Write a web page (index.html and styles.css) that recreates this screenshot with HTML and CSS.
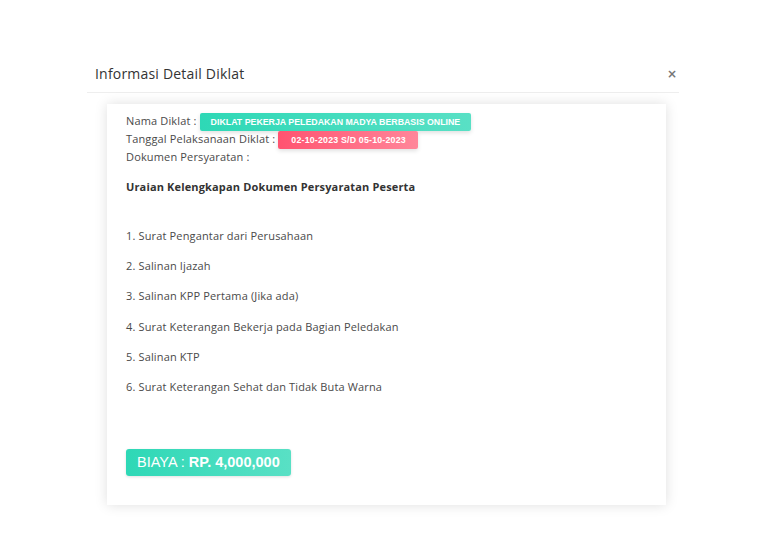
FILE: index.html
```html
<!DOCTYPE html>
<html>
<head>
<meta charset="utf-8">
<link rel="stylesheet" href="styles.css">
</head>
<body>
<div class="modal">
  <div class="modal-header">
    <h4 class="modal-title">Informasi Detail Diklat</h4>
    <span class="close">&times;</span>
  </div>
  <div class="modal-body">
    <div class="card">
      <div class="info">
        <div>Nama Diklat : <span class="badge badge-teal">DIKLAT PEKERJA PELEDAKAN MADYA BERBASIS ONLINE</span></div>
        <div>Tanggal Pelaksanaan Diklat : <span class="badge badge-red">02-10-2023 S/D 05-10-2023</span></div>
        <div>Dokumen Persyaratan :</div>
      </div>
      <p class="heading">Uraian Kelengkapan Dokumen Persyaratan Peserta</p>
      <ul class="docs">
        <li>1. Surat Pengantar dari Perusahaan</li>
        <li>2. Salinan Ijazah</li>
        <li>3. Salinan KPP Pertama (Jika ada)</li>
        <li>4. Surat Keterangan Bekerja pada Bagian Peledakan</li>
        <li>5. Salinan KTP</li>
        <li>6. Surat Keterangan Sehat dan Tidak Buta Warna</li>
      </ul>
      <div class="price">BIAYA : <b>RP. 4,000,000</b></div>
    </div>
  </div>
</div>
</body>
</html>
```

FILE: styles.css
```css
html, body {
  margin: 0;
  padding: 0;
  background: #fff;
}
body {
  font-family: "Open Sans", "Noto Sans", sans-serif;
  color: #4a4a4a;
}
.modal {
  width: 592px;
  margin: 0 0 0 87px;
  padding-top: 55px;
}
.modal-header {
  display: flex;
  align-items: center;
  justify-content: space-between;
  height: 37px;
  padding: 0 2px 0 8px;
  border-bottom: 1px solid #eeeeee;
}
.modal-title {
  margin: 0;
  font-size: 14px;
  font-weight: 400;
  color: #333;
  letter-spacing: 0.2px;
}
.close {
  font-family: "DejaVu Sans", sans-serif;
  font-size: 12px;
  font-weight: 700;
  color: #777;
}
.modal-body {
  padding: 11px 13px 20px 20px;
}
.card {
  background: #fff;
  box-shadow: 0 0 12px rgba(0, 0, 0, 0.13);
  padding: 8px 19px 29px 19px;
}
.info {
  font-size: 11px;
  line-height: 18px;
  letter-spacing: 0.15px;
}
.badge {
  font-family: "Liberation Sans", Arial, sans-serif;
  font-weight: 700;
  font-size: 8.8px;
  line-height: 13px;
  letter-spacing: 0;
  color: #fff;
  padding: 4px 11px 4px 11px;
  border-radius: 2px;
  box-shadow: 0 2px 4px rgba(0, 0, 0, 0.12);
}
.badge-teal {
  background: linear-gradient(to right, #2ed8b6, #59e0c5);
}
.badge-red {
  background: linear-gradient(to right, #ff5370, #ff869a);
  position: relative;
  z-index: 1;
  padding: 4px 12px 4px 13px;
  letter-spacing: 0.2px;
}
.heading {
  margin: 13px 0 0;
  font-size: 11px;
  font-weight: 700;
  color: #333;
  line-height: 16px;
  letter-spacing: 0.15px;
}
.docs {
  list-style: none;
  margin: 33px 0 0;
  padding: 0;
  font-size: 11px;
  letter-spacing: 0.15px;
}
.docs li {
  line-height: 16px;
  margin-bottom: 14.2px;
}
.price {
  width: fit-content;
  margin-top: 54px;
  font-family: "Liberation Sans", Arial, sans-serif;
  font-size: 14.5px;
  color: #fff;
  padding: 6px 11px 6px 11px;
  line-height: 15px;
  border-radius: 3px;
  background: linear-gradient(to right, #2ed8b6, #59e0c5);
  box-shadow: 0 1px 3px rgba(0, 0, 0, 0.12);
}
.price b {
  font-weight: 700;
}
```
